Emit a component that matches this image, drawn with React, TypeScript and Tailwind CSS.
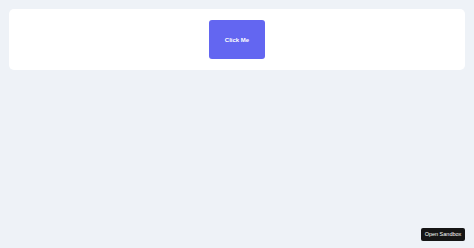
export default function App() {
  return (
    <div className="relative min-h-[248px] bg-[#eef2f7] p-[9px] font-['Liberation_Sans',sans-serif]">
      <div className="flex h-[61px] items-center justify-center rounded-[5px] bg-white">
        <button className="h-[39px] w-[56px] rounded-[3px] bg-[#6366f1] pt-px text-[6px] font-bold text-white">
          Click Me
        </button>
      </div>
      <div className="absolute bottom-[7px] right-[9px] flex h-[13px] w-[44px] items-center justify-center rounded-[2px] bg-[#151515] text-[5.5px] text-white">
        Open Sandbox
      </div>
    </div>
  )
}
